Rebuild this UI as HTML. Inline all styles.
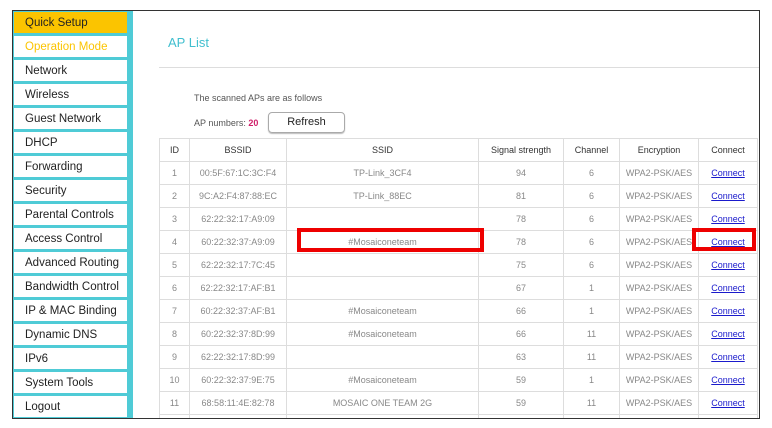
<!DOCTYPE html>
<html><head><style>
body{margin:0;width:772px;height:428px;background:#fff;position:relative;overflow:hidden;font-family:"Liberation Sans",sans-serif;}
.frame{position:absolute;left:12px;top:10px;width:746px;height:407px;border:1.5px solid #333;overflow:hidden;background:#fff}
.side{position:absolute;left:0;top:0;width:120px;height:410px;background:#4fcbd6}
.side div{position:absolute;left:1px;width:113px;height:21px;background:#fff;font-size:11.5px;color:#222;padding-left:11px;box-sizing:border-box;line-height:22px}
.title{position:absolute;left:155px;top:24px;color:#41bfcf;font-size:13px}
.hr{position:absolute;left:146px;top:56px;width:600px;height:1px;background:#ddd}
.t1{position:absolute;left:181px;top:82px;font-size:9px;color:#555}
.t2{position:absolute;left:181px;top:107px;font-size:9px;color:#555}
.btn{position:absolute;left:255px;top:101px;width:75px;height:19px;border:1px solid #aaa;border-radius:4px;font-size:11px;text-align:center;line-height:19px;color:#222;box-shadow:0 1px 1px #bbb}
table{position:absolute;left:146px;top:127px;border-collapse:collapse;font-size:9px;color:#888}
td{border:1px solid #ddd;height:22px;padding:0;text-align:center}
tr.h td{color:#333;font-size:9px}
a{color:#1a1acc;text-decoration:underline}
.red{position:absolute;border:4px solid #e00}
</style></head><body>
<div class="frame">
<div class="side">
<div style="top:1px;background:#fbc400">Quick Setup</div>
<div style="top:25px;color:#fbc400">Operation Mode</div>
<div style="top:49px">Network</div>
<div style="top:73px">Wireless</div>
<div style="top:97px">Guest Network</div>
<div style="top:121px">DHCP</div>
<div style="top:145px">Forwarding</div>
<div style="top:169px">Security</div>
<div style="top:193px">Parental Controls</div>
<div style="top:217px">Access Control</div>
<div style="top:241px">Advanced Routing</div>
<div style="top:265px">Bandwidth Control</div>
<div style="top:289px">IP &amp; MAC Binding</div>
<div style="top:313px">Dynamic DNS</div>
<div style="top:337px">IPv6</div>
<div style="top:361px">System Tools</div>
<div style="top:385px">Logout</div>
</div>
<div class="title">AP List</div>
<div class="hr"></div>
<div class="t1">The scanned APs are as follows</div>
<div class="t2">AP numbers: <b style="color:#d0206a">20</b></div>
<div class="btn">Refresh</div>
<table>
<colgroup><col style="width:30px"><col style="width:97px"><col style="width:192px"><col style="width:85px"><col style="width:56px"><col style="width:79px"><col style="width:59px"></colgroup>
<tr class="h"><td>ID</td><td>BSSID</td><td>SSID</td><td>Signal strength</td><td>Channel</td><td>Encryption</td><td>Connect</td></tr>
<tr><td>1</td><td>00:5F:67:1C:3C:F4</td><td>TP-Link_3CF4</td><td>94</td><td>6</td><td>WPA2-PSK/AES</td><td><a>Connect</a></td></tr>
<tr><td>2</td><td>9C:A2:F4:87:88:EC</td><td>TP-Link_88EC</td><td>81</td><td>6</td><td>WPA2-PSK/AES</td><td><a>Connect</a></td></tr>
<tr><td>3</td><td>62:22:32:17:A9:09</td><td></td><td>78</td><td>6</td><td>WPA2-PSK/AES</td><td><a>Connect</a></td></tr>
<tr><td>4</td><td>60:22:32:37:A9:09</td><td>#Mosaiconeteam</td><td>78</td><td>6</td><td>WPA2-PSK/AES</td><td><a>Connect</a></td></tr>
<tr><td>5</td><td>62:22:32:17:7C:45</td><td></td><td>75</td><td>6</td><td>WPA2-PSK/AES</td><td><a>Connect</a></td></tr>
<tr><td>6</td><td>62:22:32:17:AF:B1</td><td></td><td>67</td><td>1</td><td>WPA2-PSK/AES</td><td><a>Connect</a></td></tr>
<tr><td>7</td><td>60:22:32:37:AF:B1</td><td>#Mosaiconeteam</td><td>66</td><td>1</td><td>WPA2-PSK/AES</td><td><a>Connect</a></td></tr>
<tr><td>8</td><td>60:22:32:37:8D:99</td><td>#Mosaiconeteam</td><td>66</td><td>11</td><td>WPA2-PSK/AES</td><td><a>Connect</a></td></tr>
<tr><td>9</td><td>62:22:32:17:8D:99</td><td></td><td>63</td><td>11</td><td>WPA2-PSK/AES</td><td><a>Connect</a></td></tr>
<tr><td>10</td><td>60:22:32:37:9E:75</td><td>#Mosaiconeteam</td><td>59</td><td>1</td><td>WPA2-PSK/AES</td><td><a>Connect</a></td></tr>
<tr><td>11</td><td>68:58:11:4E:82:78</td><td>MOSAIC ONE TEAM 2G</td><td>59</td><td>11</td><td>WPA2-PSK/AES</td><td><a>Connect</a></td></tr>
<tr><td>12</td><td></td><td></td><td></td><td></td><td></td><td></td></tr>
</table>
</div>
<div class="red" style="left:297px;top:228px;width:179px;height:16px"></div>
<div class="red" style="left:692px;top:228px;width:56px;height:15px"></div>
</body></html>
